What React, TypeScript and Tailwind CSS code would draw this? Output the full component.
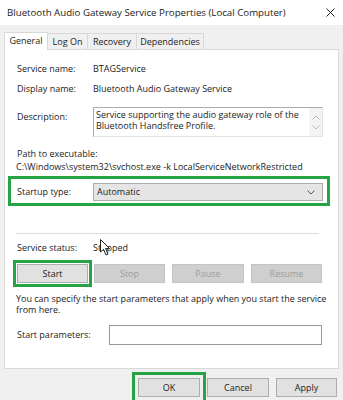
import React from "react";

const GREEN = "border-[#27a346]";

function Btn({ label, disabled, w = "w-[71px]" }: { label: string; disabled?: boolean; w?: string }) {
  return (
    <div
      className={`${w} h-[19px] flex items-center justify-center border ${
        disabled ? "bg-[#cfcfcf] border-[#c4c4c4] text-[#9d9d9d]" : "bg-[#e1e1e1] border-[#adadad] text-[#1b1b1b]"
      }`}
    >
      {label}
    </div>
  );
}

function Chevron({ up, className }: { up?: boolean; className?: string }) {
  return (
    <svg width="8" height="5" viewBox="0 0 8 5" className={className}>
      <path d={up ? "M0.5 4.5 L4 1 L7.5 4.5" : "M0.5 0.5 L4 4 L7.5 0.5"} fill="none" stroke="currentColor" strokeWidth="1" />
    </svg>
  );
}

export default function App() {
  const tabs = [
    { name: "General", w: "w-[44px]" },
    { name: "Log On", w: "w-[40px]" },
    { name: "Recovery", w: "w-[49px]" },
    { name: "Dependencies", w: "w-[67px]" },
  ];

  return (
    <div className="w-[343px] h-[400px] overflow-hidden bg-[#f0f0f0] text-[#1b1b1b] font-['Open_Sans',sans-serif] text-[9px] leading-[12px]">
      {/* title bar */}
      <div className="h-[25px] bg-white flex items-center justify-between pl-[7px] pr-[8px]">
        <span className="text-[9.7px]">Bluetooth Audio Gateway Service Properties (Local Computer)</span>
        <svg width="9" height="9" viewBox="0 0 9 9">
          <path d="M0.5 0.5 L8.5 8.5 M8.5 0.5 L0.5 8.5" stroke="#222" strokeWidth="1" />
        </svg>
      </div>

      {/* tabs */}
      <div className="flex items-end h-[24px] pl-[4px]">
        {tabs.map((t, i) =>
          i === 0 ? (
            <div
              key={t.name}
              className={`${t.w} h-[18px] -mb-px relative z-10 bg-white border border-b-0 border-[#d9d9d9] flex items-center justify-center pb-[2px]`}
            >
              {t.name}
            </div>
          ) : (
            <div
              key={t.name}
              className={`${t.w} h-[16px] border border-l-0 border-b-0 border-[#d9d9d9] flex items-center justify-center`}
            >
              {t.name}
            </div>
          )
        )}
      </div>

      {/* panel */}
      <div className="mx-[4px] h-[320px] bg-white border border-[#d9d9d9] pt-[9px] flex flex-col">
        <div className="flex h-[20px] items-center pl-[12px]">
          <span className="w-[76px]">Service name:</span>
          <span>BTAGService</span>
        </div>
        <div className="flex h-[20px] items-center pl-[12px]">
          <span className="w-[76px]">Display name:</span>
          <span>Bluetooth Audio Gateway Service</span>
        </div>
        <div className="flex mt-[8px] pl-[12px]">
          <span className="w-[76px] pt-[4px]">Description:</span>
          <div className="w-[230px] h-[30px] border border-[#ababab] border-r-[#e3e3e3] border-b-[#e3e3e3] flex">
            <div className="flex-1 pl-[2px] pt-[1px] leading-[11px]">
              <div>Service supporting the audio gateway role of the</div>
              <div>Bluetooth Handsfree Profile.</div>
            </div>
            <div className="w-[13px] bg-[#f4f4f4] flex flex-col items-center text-[#b8b8b8] pt-[7px] gap-[5px]">
              <Chevron up />
              <Chevron />
            </div>
          </div>
        </div>
        <div className="mt-[11px] pl-[12px]">Path to executable:</div>
        <div className="mt-[1px] pl-[11px]">C:\Windows\system32\svchost.exe -k LocalServiceNetworkRestricted</div>

        {/* startup type */}
        <div className={`mt-[3px] ml-[3px] w-[322px] h-[30px] border-[3px] ${GREEN} flex pl-[6px] pt-[4px]`}>
          <span className="w-[76px] pt-[3px]">Startup type:</span>
          <div className="w-[230px] h-[18px] bg-[#e5e5e5] border border-[#adadad] flex items-center justify-between pl-[3px] pr-[7px]">
            <span>Automatic</span>
            <Chevron className="text-[#555]" />
          </div>
        </div>

        <div className="mt-[27px] ml-[11px] w-[303px] h-px bg-[#dcdcdc]" />

        <div className="flex mt-[8px] pl-[12px] relative">
          <span className="w-[76px]">Service status:</span>
          <span>Stopped</span>
          <svg width="11" height="17" viewBox="0 0 11 17" className="absolute left-[95px] top-[-3px]">
            <path d="M0.5 0.5 L0.5 13 L3.5 10.3 L6 16 L8 15.1 L5.6 9.6 L9.6 9.6 Z" fill="white" stroke="#222" strokeWidth="1" strokeLinejoin="round" />
          </svg>
        </div>

        <div className="flex items-center mt-[6px] ml-[8px]">
          <div className={`border-[3px] ${GREEN} p-px`}>
            <Btn label="Start" />
          </div>
          <div className="ml-[2px]">
            <Btn label="Stop" disabled />
          </div>
          <div className="ml-[7px]">
            <Btn label="Pause" disabled w="w-[72px]" />
          </div>
          <div className="ml-[7px]">
            <Btn label="Resume" disabled />
          </div>
        </div>

        <div className="mt-[6px] pl-[11px] leading-[11px]">
          <div>You can specify the start parameters that apply when you start the service</div>
          <div>from here.</div>
        </div>

        <div className="flex items-center mt-[10px] pl-[12px]">
          <span className="w-[92px]">Start parameters:</span>
          <div className="w-[213px] h-[20px] border border-[#9a9a9a] bg-white" />
        </div>
      </div>

      {/* bottom buttons */}
      <div className="flex items-center justify-end pr-[6px] mt-[3px]">
        <div className={`border-[3px] ${GREEN} p-[3px]`}>
          <Btn label="OK" w="w-[62px]" />
        </div>
        <div className="ml-[1px]">
          <Btn label="Cancel" w="w-[62px]" />
        </div>
        <div className="ml-[7px]">
          <Btn label="Apply" w="w-[61px]" />
        </div>
      </div>
    </div>
  );
}
